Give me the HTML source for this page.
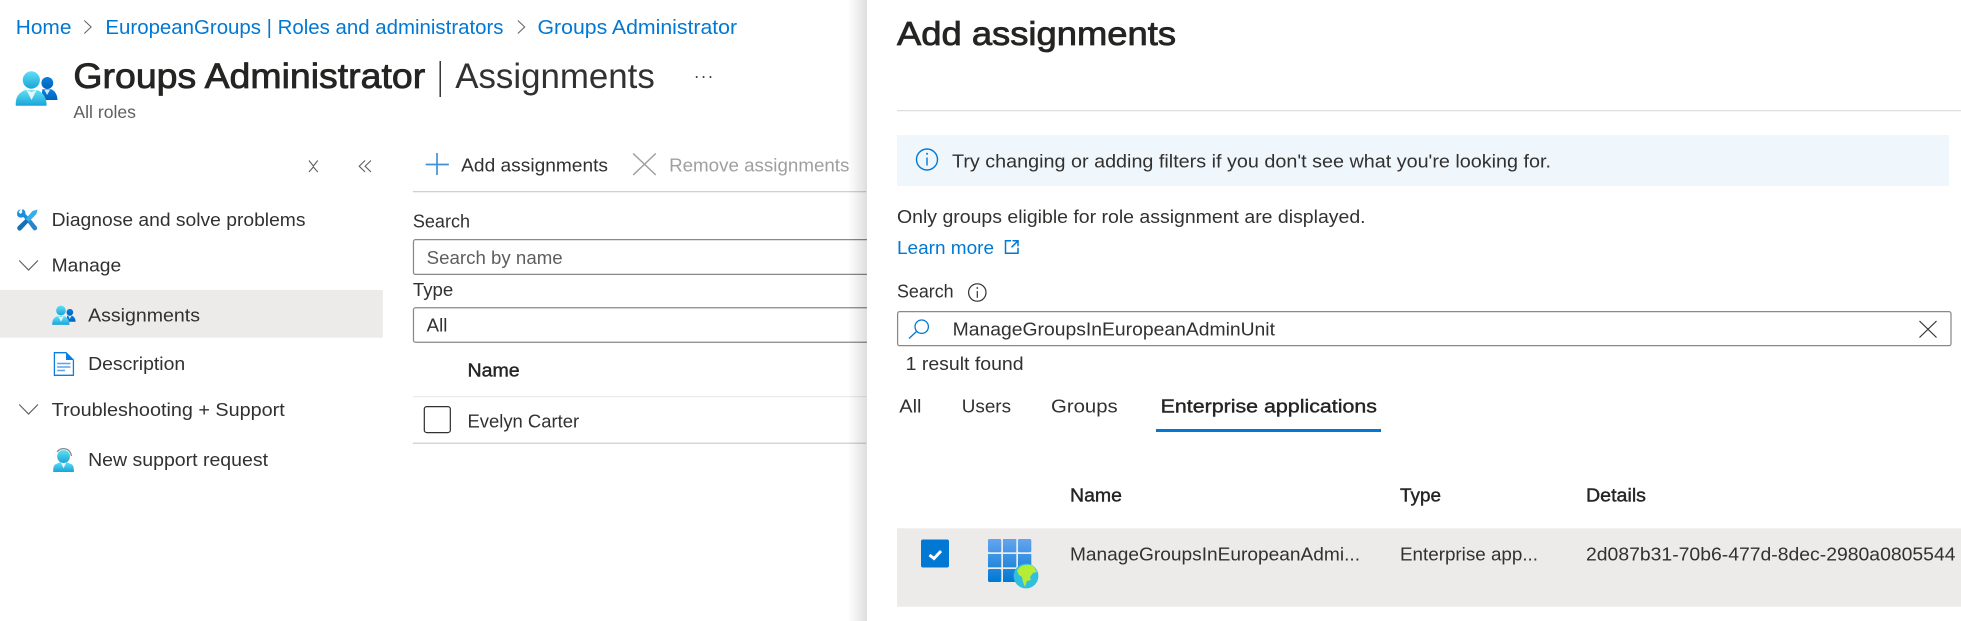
<!DOCTYPE html>
<html lang="en"><head><meta charset="utf-8"><title>Groups Administrator | Assignments</title>
<style>
html,body{margin:0;padding:0;background:#fff;width:1961px;height:621px;overflow:hidden}
svg{display:block}
text{font-family:"Liberation Sans",Arial,sans-serif;font-size:18.75px;fill:#323130;white-space:pre}
.b{fill:#0078d4}.g{fill:#a19f9d}.h{fill:#252423;stroke:#252423;stroke-width:.4px}
.hl{fill:#252423;stroke:#252423;stroke-width:.8px}
</style></head><body>
<svg xmlns="http://www.w3.org/2000/svg" width="1961" height="621" viewBox="0 0 1961 621">
<defs>
<linearGradient id="p1" x1="0" y1="0" x2="0" y2="1"><stop offset="0" stop-color="#5ee0f5"/><stop offset="1" stop-color="#1aa3d8"/></linearGradient>
<linearGradient id="p2" x1="0" y1="0" x2="0" y2="1"><stop offset="0" stop-color="#0a7fe0"/><stop offset="1" stop-color="#0062b8"/></linearGradient>
<linearGradient id="tile" gradientUnits="userSpaceOnUse" x1="0" y1="539" x2="0" y2="582"><stop offset="0" stop-color="#65a5ef"/><stop offset="1" stop-color="#0078d4"/></linearGradient>
<linearGradient id="sh" x1="0" y1="0" x2="1" y2="0"><stop offset="0" stop-color="#000" stop-opacity="0"/><stop offset="1" stop-color="#000" stop-opacity=".13"/></linearGradient>
<g id="people">
<circle cx="48" cy="83" r="6" fill="url(#p2)"/>
<path d="M41.500 100H58.300C58.300 95 56 91 52 89.300H43z" fill="url(#p2)"/>
<path d="M45 89.700L47.800 95 50.800 89.700z" fill="#cfe6f8"/>
<path d="M16 105.700C15.500 97 19 93 25 90.300H38.500C44 93 47.500 98 47.300 105.700z" fill="url(#p1)"/>
<circle cx="31.800" cy="80" r="8.700" fill="url(#p1)"/>
<path d="M27 90.300L32 100 37 90.300 32 92z" fill="#e9f7fc"/>
</g>
</defs>

<g transform="scale(.9854 1)">
<!-- breadcrumb -->
<text x="16" y="34" class="b" style="font-size:20px" textLength="56.500" lengthAdjust="spacingAndGlyphs">Home</text>
<path d="M85.500 20.500l7 6.500-7 6.500" fill="none" stroke="#605e5c" stroke-width="1"/>
<text x="107" y="34" class="b" style="font-size:20px" textLength="404" lengthAdjust="spacingAndGlyphs">EuropeanGroups | Roles and administrators</text>
<path d="M525.500 20.500l7 6.500-7 6.500" fill="none" stroke="#605e5c" stroke-width="1"/>
<text x="545.500" y="34" class="b" style="font-size:20px" textLength="202.500" lengthAdjust="spacingAndGlyphs">Groups Administrator</text>

<!-- title -->
<use href="#people"/>
<text x="74.500" y="88" class="hl" style="font-size:35px" textLength="357" lengthAdjust="spacingAndGlyphs">Groups Administrator</text>
<rect x="446" y="61" width="1.500" height="36" fill="#323130"/>
<text x="462" y="88" style="font-size:35px" textLength="202.500" lengthAdjust="spacingAndGlyphs">Assignments</text>
<g fill="#323130"><circle cx="707" cy="77" r="1"/><circle cx="714" cy="77" r="1"/><circle cx="721" cy="77" r="1"/></g>
<text x="74.500" y="118" style="font-size:17.500px;fill:#605e5c" textLength="63.500" lengthAdjust="spacingAndGlyphs">All roles</text>

<!-- sidebar toggles -->
<path d="M313.500 160.500l4.500 5.500 4.500-5.500M313.500 172l4.500-5 4.500 5" fill="none" stroke="#605e5c" stroke-width="1.100"/>
<path d="M370.500 160.500l-6 5.700 6 5.800M376.500 160.500l-6 5.700 6 5.800" fill="none" stroke="#605e5c" stroke-width="1.100"/>

<!-- toolbar -->
<path d="M443.500 153v22M432 164.500h23.500" stroke="#3d91d9" stroke-width="1.700" fill="none"/>
<text x="468" y="171.700" textLength="149" lengthAdjust="spacingAndGlyphs">Add assignments</text>
<path d="M642.500 153.500l23 21.500M665.500 153.500l-23 21.500" stroke="#a19f9d" stroke-width="1.500" fill="none"/>
<text x="679" y="171.700" class="g" textLength="183" lengthAdjust="spacingAndGlyphs">Remove assignments</text>
<rect x="419" y="191" width="460" height="1.300" fill="#d2d0ce"/>

<!-- form left -->
<text x="419" y="227.700" textLength="58" lengthAdjust="spacingAndGlyphs">Search</text>
<rect x="419.600" y="239.600" width="480" height="34.800" rx="2" fill="#fff" stroke="#8a8886" stroke-width="1.250"/>
<text x="433" y="264" style="fill:#605e5c" textLength="138" lengthAdjust="spacingAndGlyphs">Search by name</text>
<text x="419" y="296" textLength="41" lengthAdjust="spacingAndGlyphs">Type</text>
<rect x="419.600" y="307.800" width="480" height="34.400" rx="2" fill="#fff" stroke="#8a8886" stroke-width="1.250"/>
<text x="433" y="331.700" textLength="21" lengthAdjust="spacingAndGlyphs">All</text>

<text x="474.400" y="376.700" class="h" textLength="53" lengthAdjust="spacingAndGlyphs">Name</text>
<rect x="419" y="396" width="460" height="1.200" fill="#edebe9"/>
<rect x="430.600" y="406.600" width="26.400" height="26" rx="2.500" fill="#fff" stroke="#323130" stroke-width="1.250"/>
<text x="474.400" y="427.700" textLength="113.300" lengthAdjust="spacingAndGlyphs">Evelyn Carter</text>
<rect x="419" y="442.600" width="460" height="1.300" fill="#d2d0ce"/>

<!-- nav -->
<g transform="translate(17 209)">
<path d="M10 12L16.500 20.500C18 22.500 21.500 21 20.500 18L13 9z" fill="#2a86c8"/>
<path d="M4 .5C1 .5-.5 4 .8 7 2.500 9 5 9 6.500 8L10 11.500 13 9 8.800 5C9 2 7.500 .5 5.500 .3V3.500L3.800 5 1.800 3z" fill="#1a8fe0"/>
<path d="M21 .5L16 2 9 10 12 13 20 5z" fill="#32b0e8"/>
<path d="M9 10L1 17.500C-.5 20 2 23 4.500 21L12 13z" fill="#1670b4"/>
</g>
<path d="M19.500 260.500l9.500 9.500 9.500-9.500" fill="none" stroke="#605e5c" stroke-width="1.200"/>
<text x="52.400" y="226" textLength="257.600" lengthAdjust="spacingAndGlyphs">Diagnose and solve problems</text>
<text x="52.400" y="271.700" textLength="70.600" lengthAdjust="spacingAndGlyphs">Manage</text>

<rect x="0" y="290" width="388.500" height="47.700" fill="#edebe9"/>
<g transform="translate(53 305.500) scale(.56) translate(-16 -71)"><use href="#people"/></g>
<text x="89.400" y="321.700" textLength="113.600" lengthAdjust="spacingAndGlyphs">Assignments</text>

<g transform="translate(54.500 352)">
<path d="M.7.7H12.500L20 8v15.300H.7z" fill="#fff" stroke="#0a7fe0" stroke-width="1.300"/>
<path d="M12.500.7L20 8h-7.500z" fill="#0a7fe0"/>
<path d="M3.500 11.500h13.500M3.500 15h13.500M3.500 18.500h8" stroke="#5ea0ef" stroke-width="1.600"/>
</g>
<text x="89.400" y="370" textLength="98.600" lengthAdjust="spacingAndGlyphs">Description</text>

<path d="M19.500 404.500l9.500 9.500 9.500-9.500" fill="none" stroke="#605e5c" stroke-width="1.200"/>
<text x="52.400" y="416" textLength="236.600" lengthAdjust="spacingAndGlyphs">Troubleshooting + Support</text>

<g transform="translate(54 448)">
<circle cx="10.500" cy="8.500" r="6.500" fill="url(#p1)"/>
<path d="M4 4C7 -1 17 -1 18.500 8" fill="none" stroke="#8a8886" stroke-width="1.300"/>
<path d="M0 24c0-5 .5-7 3-8l4.500-2 3 6 3-6 4.500 2c2.500 1 3 3 3 8z" fill="url(#p1)"/>
<path d="M8 15l2.500 5 2.500-5-2.500 1z" fill="#e9f7fc"/>
</g>
<text x="89.400" y="466" textLength="182.600" lengthAdjust="spacingAndGlyphs">New support request</text>
</g>

<!-- panel -->
<rect x="848" y="0" width="19" height="621" fill="url(#sh)"/>
<rect x="867" y="0" width="1094" height="621" fill="#fff"/>
<text x="897" y="45" class="hl" style="font-size:33px" textLength="279" lengthAdjust="spacingAndGlyphs">Add assignments</text>
<rect x="897" y="110" width="1064" height="1.300" fill="#e1dfdd"/>

<rect x="897" y="135" width="1052" height="51" fill="#eff6fc"/>
<circle cx="927" cy="159.500" r="10.500" fill="none" stroke="#0078d4" stroke-width="1.400"/>
<path d="M927 157.500v8" stroke="#0078d4" stroke-width="1.400"/><circle cx="927" cy="153.700" r="1" fill="#0078d4"/>
<text x="952" y="167.700" textLength="599" lengthAdjust="spacingAndGlyphs">Try changing or adding filters if you don't see what you're looking for.</text>

<text x="897" y="223" textLength="468.600" lengthAdjust="spacingAndGlyphs">Only groups eligible for role assignment are displayed.</text>
<text x="897" y="254" class="b" textLength="97" lengthAdjust="spacingAndGlyphs">Learn more</text>
<path d="M1011 240.800h-5.500v12.500h12.500v-5.500M1012.500 240.800h5.500v5.500M1018 240.800l-6.500 6.500" fill="none" stroke="#0078d4" stroke-width="1.500"/>
<text x="897" y="297.300" textLength="56.600" lengthAdjust="spacingAndGlyphs">Search</text>
<circle cx="977.300" cy="292.500" r="8.700" fill="none" stroke="#323130" stroke-width="1.200"/>
<path d="M977.300 291v6.800" stroke="#323130" stroke-width="1.200"/><circle cx="977.300" cy="288" r=".9" fill="#323130"/>

<rect x="897.600" y="311.600" width="1053.400" height="34" rx="2" fill="#fff" stroke="#8a8886" stroke-width="1.250"/>
<circle cx="921.700" cy="326.700" r="6.700" fill="none" stroke="#0078d4" stroke-width="1.300"/>
<path d="M916.500 331.500l-7.500 7" stroke="#0078d4" stroke-width="1.300" fill="none"/>
<text x="952.700" y="335.700" textLength="322.300" lengthAdjust="spacingAndGlyphs">ManageGroupsInEuropeanAdminUnit</text>
<path d="M1919.500 321l17 16.500M1936.500 321l-17 16.500" stroke="#323130" stroke-width="1.200" fill="none"/>
<text x="905.600" y="370" textLength="118" lengthAdjust="spacingAndGlyphs">1 result found</text>

<text x="899.300" y="412.700" textLength="22.200" lengthAdjust="spacingAndGlyphs">All</text>
<text x="961.800" y="412.700" textLength="49.200" lengthAdjust="spacingAndGlyphs">Users</text>
<text x="1051" y="412.700" textLength="66.700" lengthAdjust="spacingAndGlyphs">Groups</text>
<text x="1160.600" y="412.700" class="h" textLength="216.400" lengthAdjust="spacingAndGlyphs">Enterprise applications</text>
<rect x="1156" y="429" width="225" height="3" fill="#0078d4"/>

<text x="1070" y="501.700" class="h" textLength="52" lengthAdjust="spacingAndGlyphs">Name</text>
<text x="1400" y="501.700" class="h" textLength="41" lengthAdjust="spacingAndGlyphs">Type</text>
<text x="1586" y="501.700" class="h" textLength="60" lengthAdjust="spacingAndGlyphs">Details</text>

<rect x="897" y="528.300" width="1064" height="78.400" fill="#edebe9"/>
<rect x="921" y="539.500" width="28" height="28" rx="2" fill="#0078d4"/>
<path d="M929.500 555l4.500 3.500 7-7.500" fill="none" stroke="#fff" stroke-width="3"/>
<g fill="url(#tile)">
<rect x="988" y="539" width="13.300" height="13.300" rx="1.500"/><rect x="1003" y="539" width="13.300" height="13.300"/><rect x="1018" y="539" width="13.300" height="13.300" rx="1.500"/>
<rect x="988" y="554" width="13.300" height="13.300"/><rect x="1003" y="554" width="13.300" height="13.300"/><rect x="1018" y="554" width="13.300" height="13.300"/>
<rect x="988" y="569" width="13.300" height="13" rx="1.500"/><rect x="1003" y="569" width="13.300" height="13"/><rect x="1018" y="569" width="13.300" height="13"/>
</g>
<circle cx="1026" cy="576" r="12.400" fill="#32bedd"/>
<path d="M1017 571C1019 566 1024 564 1031 565L1034 567 1037 572 1033 573 1030 577 1031 580 1027 581 1025 587 1023 582 1022 577 1019 575z" fill="#b4ec36"/>
<text x="1070" y="560.700" textLength="290" lengthAdjust="spacingAndGlyphs">ManageGroupsInEuropeanAdmi...</text>
<text x="1400" y="560.700" textLength="138" lengthAdjust="spacingAndGlyphs">Enterprise app...</text>
<text x="1586" y="560.700" textLength="369.500" lengthAdjust="spacingAndGlyphs">2d087b31-70b6-477d-8dec-2980a0805544</text>
</svg>
</body></html>
